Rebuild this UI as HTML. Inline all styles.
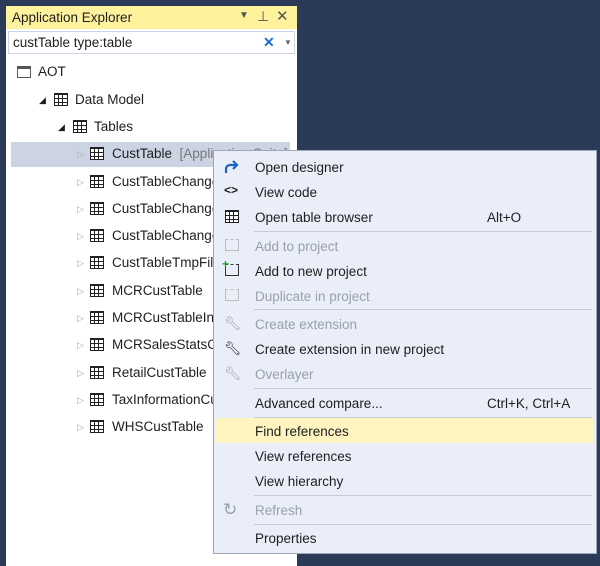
<!DOCTYPE html>
<html><head><meta charset="utf-8"><style>
*{margin:0;padding:0;box-sizing:border-box}
body{width:600px;height:556px;background:#2b3a56;position:relative;overflow:hidden;font-family:"Liberation Sans",sans-serif;font-size:13.5px;color:#1e1e1e}
.a{position:absolute;white-space:nowrap}
.panel{left:6px;top:6px;width:291px;height:560px;background:#fff}
.title{left:6px;top:6px;width:291px;height:23px;background:#fff29d}
.search{left:8px;top:31px;width:287px;height:23px;background:#fff;border:1px solid #ccd4e4}
.tbl{display:inline-block;width:14px;height:13px;border:1px solid #222;border-top-width:2px;background:
linear-gradient(#222,#222) 0 3px/100% 1px no-repeat,
linear-gradient(#222,#222) 0 7px/100% 1px no-repeat,
linear-gradient(90deg,#222,#222) 3px 0/1px 100% no-repeat,
linear-gradient(90deg,#222,#222) 7px 0/1px 100% no-repeat,#fff}
.tri{color:#aaa;font-size:9px}
.menu{left:213px;top:150px;width:384px;height:404px;background:#e9eef9;border:1px solid #a0a8b8}
.sep{position:absolute;left:40px;right:4px;height:1px;background:#c5cad6}
.mi{position:absolute;left:41px;font-size:13.5px}
.dis{color:#9aa0aa}
.sc{position:absolute;left:273px}
</style></head><body>
<div class="a panel"></div>
<div class="a title"></div>
<div class="a" style="left:12px;top:10px;font-size:13.5px">Application Explorer</div>
<div class="a" style="left:239px;top:10px;font-size:10px;color:#555">▼</div>
<div class="a" style="left:257px;top:8px;font-size:14px;color:#555">⊥</div>
<div class="a" style="left:276px;top:7px;font-size:15px;color:#555">✕</div>
<div class="a search"></div>
<div class="a" style="left:13px;top:35px">custTable type:table</div>
<div class="a" style="left:263px;top:34px;color:#1a6fd0;font-weight:bold;font-size:14px">✕</div>
<div class="a" style="left:284px;top:38px;font-size:8px;color:#666">▼</div>
<div class="a" style="left:11px;top:142px;width:279px;height:25px;background:#ccd3e2"></div>
<div class="a" style="left:17px;top:66px;width:14px;height:12px;border:1px solid #555;border-top-width:3px;background:#fff"></div>
<div class="a" style="left:38px;top:64px">AOT</div>
<div class="a" style="left:39px;top:95px;font-size:9px">◢</div><span class="a tbl" style="left:54px;top:93px"></span><div class="a" style="left:75px;top:92px">Data Model</div>
<div class="a" style="left:58px;top:122px;font-size:9px">◢</div><span class="a tbl" style="left:73px;top:120px"></span><div class="a" style="left:94px;top:119px">Tables</div>
<div class="a tri" style="left:77px;top:149px">▷</div><span class="a tbl" style="left:90px;top:147px"></span><div class="a" style="left:112px;top:146px">CustTable &nbsp;<span style="color:#777">[Application Suite]</span></div>
<div class="a tri" style="left:77px;top:177px">▷</div><span class="a tbl" style="left:90px;top:175px"></span><div class="a" style="left:112px;top:174px">CustTableChanges</div>
<div class="a tri" style="left:77px;top:204px">▷</div><span class="a tbl" style="left:90px;top:202px"></span><div class="a" style="left:112px;top:201px">CustTableChanges</div>
<div class="a tri" style="left:77px;top:231px">▷</div><span class="a tbl" style="left:90px;top:229px"></span><div class="a" style="left:112px;top:228px">CustTableChanges</div>
<div class="a tri" style="left:77px;top:258px">▷</div><span class="a tbl" style="left:90px;top:256px"></span><div class="a" style="left:112px;top:255px">CustTableTmpFilter</div>
<div class="a tri" style="left:77px;top:286px">▷</div><span class="a tbl" style="left:90px;top:284px"></span><div class="a" style="left:112px;top:283px">MCRCustTable</div>
<div class="a tri" style="left:77px;top:313px">▷</div><span class="a tbl" style="left:90px;top:311px"></span><div class="a" style="left:112px;top:310px">MCRCustTableInfo</div>
<div class="a tri" style="left:77px;top:340px">▷</div><span class="a tbl" style="left:90px;top:338px"></span><div class="a" style="left:112px;top:337px">MCRSalesStatsCust</div>
<div class="a tri" style="left:77px;top:368px">▷</div><span class="a tbl" style="left:90px;top:366px"></span><div class="a" style="left:112px;top:365px">RetailCustTable</div>
<div class="a tri" style="left:77px;top:395px">▷</div><span class="a tbl" style="left:90px;top:393px"></span><div class="a" style="left:112px;top:392px">TaxInformationCust</div>
<div class="a tri" style="left:77px;top:422px">▷</div><span class="a tbl" style="left:90px;top:420px"></span><div class="a" style="left:112px;top:419px">WHSCustTable</div>

<div class="a menu">
<div class="a" style="left:2px;top:267px;width:378px;height:25px;background:#fdf4bf"></div>
<svg class="a" style="left:9px;top:8px" width="16" height="16"><path d="M13 6 H7 A4 4 0 0 0 3 10 V14 M10 2 L14 6 L10 10" fill="none" stroke="#1a64c0" stroke-width="2.2"/></svg>
<div class="mi" style="top:9px">Open designer</div>
<div class="a" style="left:10px;top:32px;font-weight:bold;font-size:12px">&lt;&gt;</div>
<div class="mi" style="top:34px">View code</div>
<span class="a tbl" style="left:11px;top:59px"></span>
<div class="mi" style="top:59px">Open table browser</div><div class="sc" style="top:59px">Alt+O</div>
<div class="sep" style="top:80px"></div>
<div class="a" style="left:11px;top:88px;width:14px;height:12px;border:1px solid #bbb;border-top-style:dashed"></div>
<div class="mi dis" style="top:88px">Add to project</div>
<div class="a" style="left:11px;top:113px;width:14px;height:12px;border:1px solid #333;border-top-style:dashed"></div><div class="a" style="left:8px;top:106px;color:#2a2;font-weight:bold;font-size:12px">+</div>
<div class="mi" style="top:113px">Add to new project</div>
<div class="a" style="left:11px;top:138px;width:14px;height:12px;border:1px solid #bbb;border-top-style:dashed"></div>
<div class="mi dis" style="top:138px">Duplicate in project</div>
<div class="sep" style="top:158px"></div>
<div class="a dis" style="left:10px;top:165px">🔧︎</div>
<div class="mi dis" style="top:166px">Create extension</div>
<div class="a" style="left:10px;top:190px">🔧︎</div>
<div class="mi" style="top:191px">Create extension in new project</div>
<div class="a dis" style="left:10px;top:215px">🔧︎</div>
<div class="mi dis" style="top:216px">Overlayer</div>
<div class="sep" style="top:237px"></div>
<div class="mi" style="top:245px">Advanced compare...</div><div class="sc" style="top:245px">Ctrl+K, Ctrl+A</div>
<div class="sep" style="top:266px"></div>
<div class="mi" style="top:273px">Find references</div>
<div class="mi" style="top:298px">View references</div>
<div class="mi" style="top:323px">View hierarchy</div>
<div class="sep" style="top:344px"></div>
<div class="a dis" style="left:9px;top:349px;font-size:17px">↻</div>
<div class="mi dis" style="top:352px">Refresh</div>
<div class="sep" style="top:373px"></div>
<div class="mi" style="top:380px">Properties</div>
</div>
</body></html>
